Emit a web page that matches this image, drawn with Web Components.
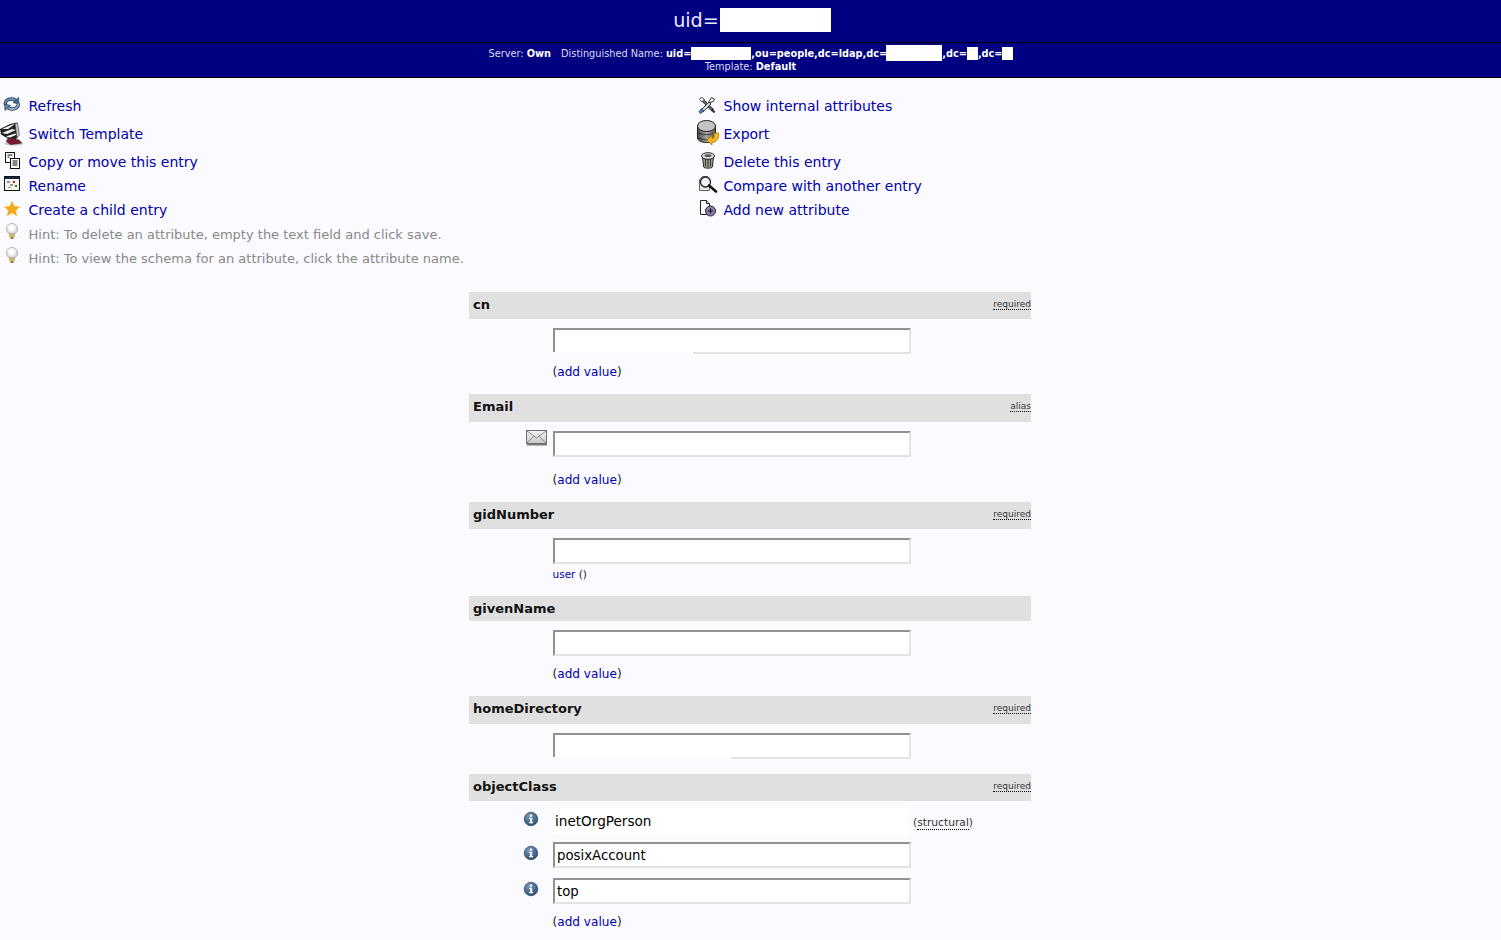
<!DOCTYPE html>
<html>
<head>
<meta charset="utf-8">
<title>uid</title>
<style>
  html, body { margin: 0; padding: 0; background: #fbfbff; font-family: "DejaVu Sans", sans-serif; color: #000; }
  body { overflow: hidden; height: 940px; }
</style>
</head>
<body>
<pla-header></pla-header>
<pla-actions>
  <pla-action slot="left" icon="refresh" h="24">Refresh</pla-action>
  <pla-action slot="left" icon="template" h="32">Switch Template</pla-action>
  <pla-action slot="left" icon="copy" h="24">Copy or move this entry</pla-action>
  <pla-action slot="left" icon="rename" h="24">Rename</pla-action>
  <pla-action slot="left" icon="star" h="24">Create a child entry</pla-action>
  <pla-action slot="left" icon="bulb" h="24" hint>Hint: To delete an attribute, empty the text field and click save.</pla-action>
  <pla-action slot="left" icon="bulb" h="24" hint>Hint: To view the schema for an attribute, click the attribute name.</pla-action>
  <pla-action slot="right" icon="tools" h="24">Show internal attributes</pla-action>
  <pla-action slot="right" icon="export" h="32">Export</pla-action>
  <pla-action slot="right" icon="trash" h="24">Delete this entry</pla-action>
  <pla-action slot="right" icon="compare" h="24">Compare with another entry</pla-action>
  <pla-action slot="right" icon="add" h="24">Add new attribute</pla-action>
</pla-actions>
<pla-form>
  <pla-attr name="cn" note="required" head="27" pad="14">
    <pla-value mask="140"></pla-value>
    <pla-add style="margin-top:9px"></pla-add>
  </pla-attr>
  <pla-attr name="Email" note="alias" head="28" pad="14">
    <pla-value icon="mail"></pla-value>
    <pla-add style="margin-top:14px"></pla-add>
  </pla-attr>
  <pla-attr name="gidNumber" note="required" head="27" pad="15">
    <pla-value></pla-value>
    <pla-user></pla-user>
  </pla-attr>
  <pla-attr name="givenName" head="25" pad="14">
    <pla-value></pla-value>
    <pla-add style="margin-top:9px"></pla-add>
  </pla-attr>
  <pla-attr name="homeDirectory" note="required" head="28" pad="15">
    <pla-value mask="178"></pla-value>
  </pla-attr>
  <pla-attr name="objectClass" note="required" head="27" pad="0">
    <pla-value icon="info" text="inetOrgPerson" tag="structural" style="margin-top:-2px"></pla-value>
    <pla-value icon="info" value="posixAccount" style="margin-top:8px"></pla-value>
    <pla-value icon="info" value="top" style="margin-top:10px"></pla-value>
    <pla-add style="margin-top:9px"></pla-add>
  </pla-attr>
</pla-form>

<script>
const ICONS = {
  refresh: `<svg width="28" height="24" viewBox="0 0 28 24" fill="none">
    <path d="M5 10.500c0-3.500 3-5.500 6.500-5.500 2 0 3.500.7 4.500 1.800" stroke="#1f3550" stroke-width="3.400"/>
    <path d="M5 10.500c0-3.500 3-5.500 6.500-5.500 2 0 3.500.7 4.500 1.800" stroke="#6f96b8" stroke-width="1.800"/>
    <path d="M18.500 3.500l.5 6.500-6-1.500z" fill="#3f6a93" stroke="#1f3550" stroke-width=".7"/>
    <path d="M18.500 9.500c0 3.500-3 5.500-6.500 5.500-2 0-3.500-.7-4.500-1.800" stroke="#1f3550" stroke-width="3.400"/>
    <path d="M18.500 9.500c0 3.500-3 5.500-6.500 5.500-2 0-3.500-.7-4.500-1.800" stroke="#9db9d2" stroke-width="1.800"/>
    <path d="M5 16.500l-.5-6.500 6 1.500z" fill="#5f88ad" stroke="#1f3550" stroke-width=".7"/>
  </svg>`,
  template: `<svg width="28" height="32" viewBox="0 0 28 32">
    <ellipse cx="14" cy="25.500" rx="9.500" ry="2" fill="#c4c4c4"/>
    <path d="M8 20l11 2 2.500 3-11 1.500-4-3z" fill="#7d1b2e" stroke="#3a0a12" stroke-width=".6"/>
    <path d="M0 11l10-5 7-1.500 2 11-3 6-10-2-5-3z" fill="#222"/>
    <path d="M2 11l9-4 4-1-7 5z M2 15l10-4 4 1-9 4z M6 18.500l9-3 2 1-7 3z" fill="#f4f4f4"/>
    <path d="M15 5.500l2.500-.5 2 12-2.500 3z" fill="#c9c9c9" stroke="#333" stroke-width=".6"/>
  </svg>`,
  copy: `<svg width="28" height="24" viewBox="0 0 28 24" fill="#fff" stroke="#111">
    <rect x="5.500" y="2.500" width="9" height="10"/>
    <path d="M7.500 5h5M7.500 7h2" fill="none"/>
    <rect x="10.500" y="8.500" width="9" height="10"/>
    <path d="M12.500 11h5M12.500 13h5M12.500 15h5" fill="none"/>
  </svg>`,
  rename: `<svg width="28" height="24" viewBox="0 0 28 24">
    <rect x="4.500" y="2.500" width="15" height="14" fill="#f4f4ee" stroke="#111"/>
    <rect x="5" y="3" width="14" height="2" fill="#15254f"/>
    <path d="M7 7h3v2H7zM10 10h3v2h-3zM8 13h3v1H8z" fill="#999"/>
    <rect x="13" y="7" width="2" height="2" fill="#b22"/><rect x="15" y="11" width="2" height="2" fill="#282"/>
  </svg>`,
  star: `<svg width="28" height="24" viewBox="0 0 28 24">
    <path d="M12 3l2.200 5.200 5.800.5-4.400 3.700 1.400 5.600-5-3-5 3 1.400-5.600L4 8.700l5.800-.5z" fill="#f6a81c" stroke="#f9c14e" stroke-width=".5"/>
  </svg>`,
  bulb: `<svg width="28" height="24" viewBox="0 0 28 24">
    <defs><radialGradient id="b" cx=".45" cy=".35" r=".7"><stop offset=".3" stop-color="#fff"/><stop offset="1" stop-color="#c4c4c4"/></radialGradient></defs>
    <circle cx="12" cy="7" r="5.500" fill="url(#b)" stroke="#b4b4b4"/>
    <path d="M9.500 12h5v2.500h-5z" fill="#d8c568" stroke="#a8963f" stroke-width=".6"/>
    <path d="M10.500 15h3v2h-3z" fill="#8c7a3c"/>
  </svg>`,
  tools: `<svg width="28" height="24" viewBox="0 0 28 24">
    <path d="M7 5.500l11 11" stroke="#222" stroke-width="3"/>
    <path d="M7 5.500l11 11" stroke="#bbb" stroke-width="1"/>
    <path d="M4.500 5.500l2-2.500 3 3-2.500 2z" fill="#eee" stroke="#222" stroke-width=".8"/>
    <path d="M16.500 3.500l3 1.500-1 2.500-3.500 1-1-1z" fill="#f2f2f2" stroke="#222" stroke-width=".9"/>
    <path d="M14 8L6 16l2 2 8-8z" fill="#cfd5dc" stroke="#222" stroke-width=".9"/>
    <path d="M6.500 14.500l-2.500 3 1.500 2 3.500-2.500z" fill="#4c7fb0" stroke="#1f3550" stroke-width=".7"/>
    <path d="M16 16.500l2.500 2.500 2-1-3-3.500z" fill="#333"/>
  </svg>`,
  export: `<svg width="28" height="32" viewBox="0 0 28 32">
    <defs><linearGradient id="d" x1="0" x2="1" y1="0" y2="0"><stop offset="0" stop-color="#4a4a4a"/><stop offset=".5" stop-color="#a4a4a4"/><stop offset="1" stop-color="#555"/></linearGradient></defs>
    <path d="M2.500 8v12c0 2.500 4 4.500 9 4.500s9-2 9-4.500V8z" fill="url(#d)" stroke="#222"/>
    <ellipse cx="11.500" cy="8" rx="9" ry="5.500" fill="#c4c4c4" stroke="#222"/>
    <path d="M2.500 14c2 3.500 16 3.500 18 0M2.500 19c2 3.500 16 3.500 18 0" fill="none" stroke="#222" stroke-width=".8"/>
    <path d="M18.500 15h5c1.200 5-2 9.500-6.500 9.500V27l-5.500-5 5.500-4.500v2.800c2.200 0 3-2.300 1.500-5.300z" fill="#f3b61f" stroke="#8f6a00" stroke-width=".7"/>
  </svg>`,
  trash: `<svg width="28" height="24" viewBox="0 0 28 24">
    <path d="M7.500 6.500l1.200 10.500c.6 1.500 8 1.500 8.600 0l1.200-10.500z" fill="#a6a68f" stroke="#222"/>
    <path d="M10.500 9v7.500M13 9v8M15.500 9v7.500" stroke="#3a3a3a" stroke-width="1.200" fill="none"/>
    <ellipse cx="13" cy="6" rx="6.500" ry="3.300" fill="#ddd" stroke="#222"/>
    <ellipse cx="13" cy="5.700" rx="3.500" ry="1.400" fill="#555"/>
  </svg>`,
  compare: `<svg width="28" height="24" viewBox="0 0 28 24">
    <path d="M4.500 6l3-3.500h5l2 3v11h-10z" fill="#e4e4e4" stroke="#666"/>
    <circle cx="10.500" cy="8" r="5" fill="#f2f6fa" stroke="#222" stroke-width="1.300"/>
    <path d="M14 11.500l7 6" stroke="#111" stroke-width="2.600" stroke-linecap="round"/>
  </svg>`,
  add: `<svg width="28" height="24" viewBox="0 0 28 24">
    <path d="M5.500 2.500h6l3 3v11h-9z" fill="#fff" stroke="#222"/>
    <path d="M11.500 2.500v3h3" fill="#ddd" stroke="#222"/>
    <circle cx="15.500" cy="13" r="5" fill="#8f7fb0" stroke="#222"/>
    <path d="M13 13h5M15.500 10.500v5" stroke="#111" stroke-width="1.200"/>
  </svg>`,
  mail: `<svg width="21" height="16" viewBox="0 0 21 16">
    <defs><linearGradient id="m" x1="0" x2="0" y1="0" y2="1"><stop offset="0" stop-color="#f2f2f2"/><stop offset="1" stop-color="#c8c8c8"/></linearGradient></defs>
    <path d="M1 14.500h20" stroke="#777" stroke-width="2"/>
    <rect x=".5" y=".5" width="20" height="13" fill="url(#m)" stroke="#6f6f6f"/>
    <path d="M1 1l9.500 7L20 1M1 13l7-7M20 13l-7-7" fill="none" stroke="#8a8a8a"/>
  </svg>`,
  info: `<svg width="16" height="16" viewBox="0 0 16 16">
    <defs><radialGradient id="i" cx=".4" cy=".3" r=".8"><stop offset="0" stop-color="#7f9fc0"/><stop offset="1" stop-color="#1f4268"/></radialGradient></defs>
    <circle cx="8" cy="8" r="6.800" fill="url(#i)" stroke="#22364f" stroke-width=".6"/>
    <rect x="6.900" y="3.600" width="2.200" height="2" fill="#fff"/>
    <path d="M6.200 6.800h2.900v4.200h1v1.200H6.200V11h1V8H6.200z" fill="#fff"/>
  </svg>`
};

class PlaHeader extends HTMLElement {
  constructor() {
    super();
    this.attachShadow({ mode: 'open' }).innerHTML = `
      <style>
        :host { display: block; background: #000080; color: #fff; text-align: center; }
        .title { box-sizing: content-box; height: 40px; padding: 0 0 2px 3px; font-size: 19.2px; display: flex; justify-content: center; align-items: center; color: #e8e8ff; gap: 1px; border-bottom: 1px solid #000; }
        .title i { display: block; width: 111px; height: 24px; background: #fff; }
        .sub { box-sizing: border-box; height: 35px; border-bottom: 1px solid #000; font-size: 9.75px; line-height: 13px; padding-top: 2px; color: #dcdcf5; }
        .sub > div { height: 13px; }
        .sub > div:first-child { height: 15px; }
        b { color: #fff; }
        .sp { display: inline-block; width: 4px; }
        i.r { display: inline-block; background: #fff; height: 13px; vertical-align: -3px; }
      </style>
      <div class="title"><span>uid=</span><i></i></div>
      <div class="sub">
        <div>Server: <b>Own</b> <span class="sp"></span> Distinguished Name: <b>uid=<i class="r" style="width:60px"></i>,ou=people,dc=ldap,dc=<i class="r" style="width:56px;height:16px;vertical-align:-4px;margin-left:-1px"></i>,dc=<i class="r" style="width:11px"></i>,dc=<i class="r" style="width:11px;margin-left:-1px"></i></b></div>
        <div>Template: <b>Default</b></div>
      </div>`;
  }
}
customElements.define('pla-header', PlaHeader);

class PlaActions extends HTMLElement {
  constructor() {
    super();
    this.attachShadow({ mode: 'open' }).innerHTML = `
      <style>
        :host { display: grid; grid-template-columns: 695px 1fr; padding-top: 16px; height: 198px; }
        .col { display: flex; flex-direction: column; }
      </style>
      <div class="col"><slot name="left"></slot></div>
      <div class="col"><slot name="right"></slot></div>`;
  }
}
customElements.define('pla-actions', PlaActions);

class PlaAction extends HTMLElement {
  connectedCallback() {
    if (this.shadowRoot) return;
    const hint = this.hasAttribute('hint');
    this.attachShadow({ mode: 'open' }).innerHTML = `
      <style>
        :host { display: flex; align-items: center; height: ${this.getAttribute('h')}px; font-size: ${hint ? 13 : 14}px; color: ${hint ? '#888' : '#0000aa'}; white-space: nowrap; }
        .ic { width: 28.5px; flex: none; height: 100%; }
        svg { display: block; }
      </style>
      <div class="ic">${ICONS[this.getAttribute('icon')]}</div>
      <slot></slot>`;
  }
}
customElements.define('pla-action', PlaAction);

class PlaForm extends HTMLElement {
  constructor() {
    super();
    this.attachShadow({ mode: 'open' }).innerHTML = `
      <style>
        :host { display: block; width: 562px; margin-left: 469px; }
      </style>
      <slot></slot>`;
  }
}
customElements.define('pla-form', PlaForm);

class PlaAttr extends HTMLElement {
  connectedCallback() {
    if (this.shadowRoot) return;
    const note = this.getAttribute('note');
    const head = Number(this.getAttribute('head'));
    this.attachShadow({ mode: 'open' }).innerHTML = `
      <style>
        :host { display: block; }
        .head { box-sizing: border-box; display: flex; justify-content: space-between; align-items: center; height: ${head}px; background: #e0e0e0; padding: 0 0 ${head === 25 ? 1 : 3}px 4px; font-size: 13px; font-weight: bold; color: #111; }
        abbr { font-size: 9px; font-weight: normal; text-decoration: none; border-bottom: 1px dotted #000; line-height: 10px; color: #333; margin-top: ${head % 2}px; }
        .body { padding-top: 9px; padding-bottom: ${this.getAttribute('pad')}px; display: flex; flex-direction: column; align-items: stretch; }
      </style>
      <div class="head"><span>${this.getAttribute('name')}</span>${note ? `<abbr>${note}</abbr>` : ''}</div>
      <div class="body"><slot></slot></div>`;
  }
}
customElements.define('pla-attr', PlaAttr);

class PlaValue extends HTMLElement {
  connectedCallback() {
    if (this.shadowRoot) return;
    const icon = this.getAttribute('icon');
    const text = this.getAttribute('text');
    const tag = this.getAttribute('tag');
    const mask = this.getAttribute('mask');
    const iconOffset = icon === 'mail' ? 'margin: -1px 6px 0 0;' : 'margin: 3px 14px 0 0;';
    this.attachShadow({ mode: 'open' }).innerHTML = `
      <style>
        :host { display: flex; align-items: flex-start; height: 26px; }
        .ic { width: 84px; flex: none; display: flex; justify-content: flex-end; }
        .ic svg { display: block; ${iconOffset} }
        .field { position: relative; width: 358px; height: 26px; }
        input { box-sizing: border-box; display: block; width: 358px; height: 26px; margin: 0; padding: 0 2px; background: #fff; border: 2px solid; border-color: #919191 #e3e3e3 #e3e3e3 #919191; font: 13.3px "DejaVu Sans", sans-serif; color: #000; outline: none; }
        .mask { position: absolute; left: 0; bottom: 0; height: 2px; background: #fbfbff; }
        .plain { box-sizing: border-box; width: 354px; height: 28px; margin-top: -1px; padding: 0 2px; background: #fff; font-size: 13.6px; line-height: 28px; }
        .tag { font-size: 10.7px; color: #333; margin: 8px 0 0 6px; line-height: 13px; }
        abbr { text-decoration: none; border-bottom: 1px dotted #000; }
      </style>
      <div class="ic">${icon ? ICONS[icon] : ''}</div>
      ${text
        ? `<div class="plain">${text}</div><div class="tag">(<abbr>${tag}</abbr>)</div>`
        : `<div class="field"><input value="${this.getAttribute('value') || ''}">${mask ? `<div class="mask" style="width:${mask}px"></div>` : ''}</div>`}`;
  }
}
customElements.define('pla-value', PlaValue);

class PlaAdd extends HTMLElement {
  constructor() {
    super();
    this.attachShadow({ mode: 'open' }).innerHTML = `
      <style>
        :host { display: block; padding-left: 83.5px; padding-top: 1px; font-size: 12.1px; line-height: 16px; color: #222; }
        span { color: #0000aa; }
      </style>
      (<span>add value</span>)`;
  }
}
customElements.define('pla-add', PlaAdd);

class PlaUser extends HTMLElement {
  constructor() {
    super();
    this.attachShadow({ mode: 'open' }).innerHTML = `
      <style>
        :host { display: block; padding-left: 83.5px; margin-top: 3px; font-size: 10.5px; line-height: 14px; color: #222; height: 14px; }
        span { color: #0000aa; }
      </style>
      <span>user</span> ()`;
  }
}
customElements.define('pla-user', PlaUser);
</script>
</body>
</html>
